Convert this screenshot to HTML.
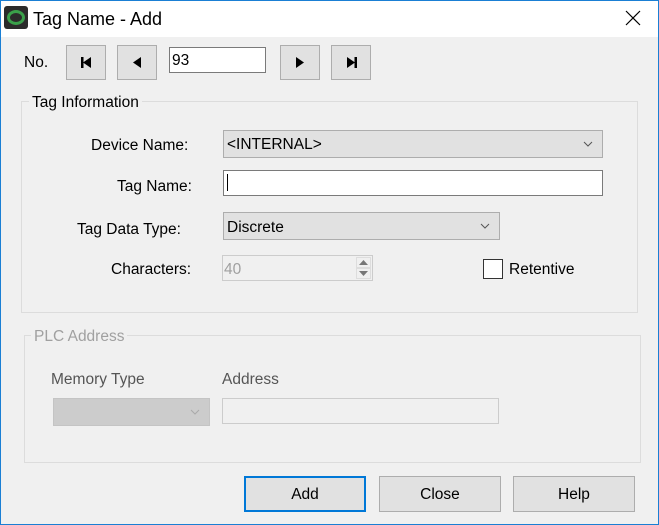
<!DOCTYPE html>
<html><head><style>
*{box-sizing:border-box;margin:0;padding:0}
body{width:659px;height:525px;overflow:hidden;background:#f0f0f0;font-family:"Liberation Sans",sans-serif;font-size:15.5px;color:#000;position:relative}
.a{position:absolute}
.win{left:0;top:0;width:659px;height:525px;border:1px solid #1a7fd4}
.title{left:1px;top:1px;width:657px;height:36px;background:#fff}
.btn{background:#e1e1e1;border:1px solid #adadad;text-align:center}
.inp{background:#fff;border:1px solid #7a7a7a}
.combo{background:#e1e1e1;border:1px solid #adadad}
.grp{border:1px solid #dcdcdc}
.lbl{white-space:nowrap}
.dis{color:#a0a0a0}
</style></head><body>
<div class="a win"></div>
<div class="a title"></div>
<div class="a" style="left:4px;top:6px;width:24px;height:23px;background:#2b2b2b;border-radius:3px"></div>
<div class="a" style="left:7px;top:10px;width:18px;height:15px;border:3px solid #3aa04a;border-radius:50%"></div>
<div class="a lbl" style="left:33px;top:9px;font-size:18px">Tag Name - Add</div>
<svg class="a" style="left:625px;top:10px" width="16" height="16"><path d="M1 1L15 15M15 1L1 15" stroke="#000" stroke-width="1.2"/></svg>

<div class="a lbl" style="left:24px;top:54px">No.</div>
<div class="a btn" style="left:66px;top:45px;width:40px;height:35px"></div>
<svg class="a" style="left:80px;top:56px" width="13" height="13"><rect x="1" y="1" width="2.5" height="11"/><path d="M11 1L3 6.5L11 12Z"/></svg>
<div class="a btn" style="left:117px;top:45px;width:40px;height:35px"></div>
<svg class="a" style="left:131px;top:56px" width="13" height="13"><path d="M10 1L2 6.5L10 12Z"/></svg>
<div class="a inp" style="left:169px;top:47px;width:97px;height:26px"></div>
<div class="a lbl" style="left:172px;top:52px">93</div>
<div class="a btn" style="left:280px;top:45px;width:40px;height:35px"></div>
<svg class="a" style="left:294px;top:56px" width="13" height="13"><path d="M2 1L10 6.5L2 12Z"/></svg>
<div class="a btn" style="left:331px;top:45px;width:40px;height:35px"></div>
<svg class="a" style="left:345px;top:56px" width="13" height="13"><path d="M2 1L10 6.5L2 12Z"/><rect x="9.5" y="1" width="2.5" height="11"/></svg>

<div class="a grp" style="left:21px;top:101px;width:617px;height:212px"></div>
<div class="a lbl" style="left:29px;top:94px;padding:0 3px;background:#f0f0f0">Tag Information</div>
<div class="a lbl" style="left:91px;top:137px">Device Name:</div>
<div class="a combo" style="left:223px;top:130px;width:380px;height:28px"></div>
<div class="a lbl" style="left:227px;top:136px">&lt;INTERNAL&gt;</div>
<svg class="a" style="left:583px;top:140px" width="10" height="8"><path d="M1 2L5 6L9 2" stroke="#555" fill="none"/></svg>
<div class="a lbl" style="left:117px;top:178px">Tag Name:</div>
<div class="a inp" style="left:223px;top:170px;width:380px;height:26px"></div>
<div class="a" style="left:227px;top:174px;width:1px;height:17px;background:#000"></div>
<div class="a lbl" style="left:77px;top:221px">Tag Data Type:</div>
<div class="a combo" style="left:223px;top:212px;width:277px;height:28px"></div>
<div class="a lbl" style="left:227px;top:219px">Discrete</div>
<svg class="a" style="left:480px;top:222px" width="10" height="8"><path d="M1 2L5 6L9 2" stroke="#555" fill="none"/></svg>
<div class="a lbl" style="left:111px;top:261px">Characters:</div>
<div class="a" style="left:222px;top:255px;width:151px;height:26px;border:1px solid #ccc"></div>
<div class="a lbl dis" style="left:224px;top:261px">40</div>
<svg class="a" style="left:356px;top:257px" width="15" height="22"><rect x="0.5" y="0.5" width="14" height="10" fill="#f0f0f0" stroke="#ddd"/><rect x="0.5" y="11.5" width="14" height="10" fill="#f0f0f0" stroke="#ddd"/><path d="M3 8L7.5 3L12 8Z" fill="#777"/><path d="M3 14L7.5 19L12 14Z" fill="#777"/></svg>
<div class="a" style="left:483px;top:259px;width:20px;height:20px;background:#fff;border:1px solid #333"></div>
<div class="a lbl" style="left:509px;top:261px">Retentive</div>

<div class="a grp" style="left:24px;top:335px;width:617px;height:128px"></div>
<div class="a lbl dis" style="left:31px;top:328px;padding:0 3px;background:#f0f0f0">PLC Address</div>
<div class="a lbl" style="left:51px;top:371px;color:#555">Memory Type</div>
<div class="a lbl" style="left:222px;top:371px;color:#555">Address</div>
<div class="a" style="left:53px;top:398px;width:157px;height:28px;background:#ccc;border:1px solid #c4c4c4"></div>
<svg class="a" style="left:190px;top:408px" width="10" height="8"><path d="M1 2L5 6L9 2" stroke="#aaa" fill="none"/></svg>
<div class="a" style="left:222px;top:398px;width:277px;height:26px;border:1px solid #ccc;background:#f0f0f0"></div>

<div class="a btn" style="left:244px;top:476px;width:122px;height:36px;border:2px solid #0078d7;line-height:33px">Add</div>
<div class="a btn" style="left:379px;top:476px;width:122px;height:36px;line-height:35px">Close</div>
<div class="a btn" style="left:513px;top:476px;width:122px;height:36px;line-height:35px">Help</div>
</body></html>
